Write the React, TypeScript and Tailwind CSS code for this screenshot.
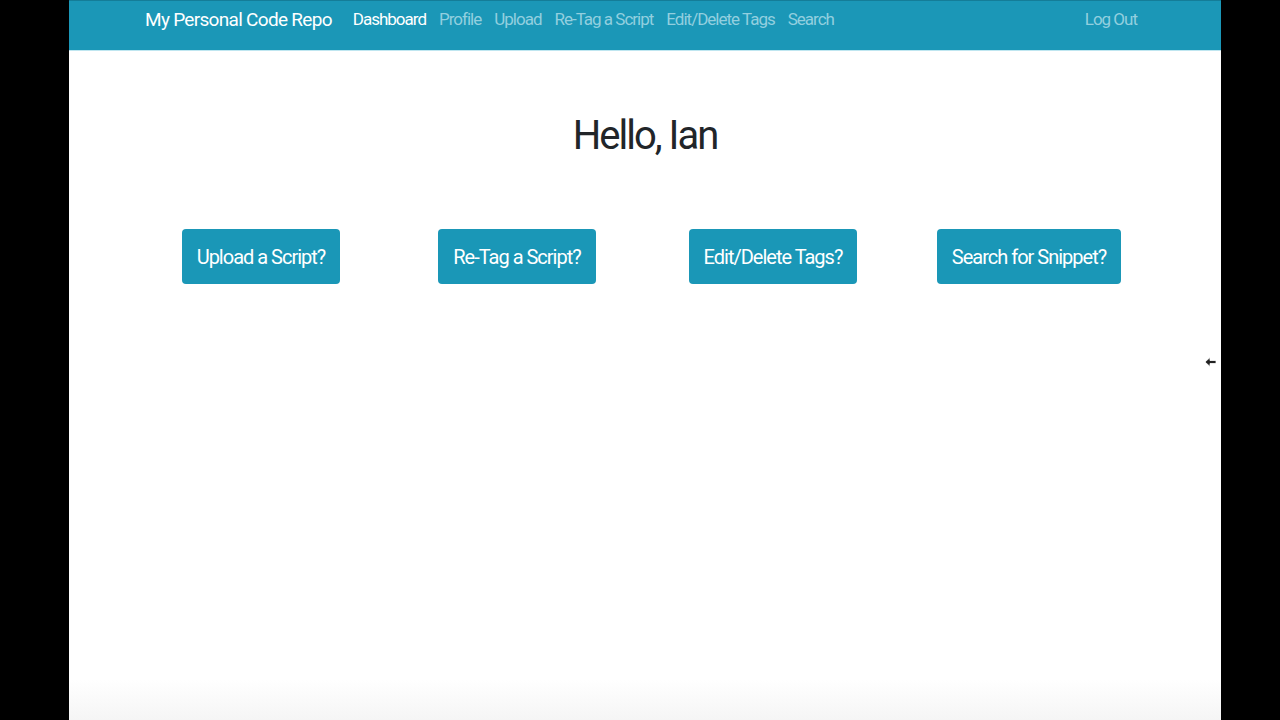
import React from 'react';

const links = ['Profile', 'Upload', 'Re-Tag a Script', 'Edit/Delete Tags', 'Search'];
const actions = ['Upload a Script?', 'Re-Tag a Script?', 'Edit/Delete Tags?', 'Search for Snippet?'];

export default function App() {
  return (
    <div
      className="h-screen bg-black pl-[69px] pr-[59px] flex"
      style={{ fontFamily: 'Roboto, "Liberation Sans", sans-serif' }}
    >
      <div className="relative flex-1 bg-white flex flex-col">
        {/* navbar */}
        <nav className="h-[51px] bg-[#1b97b7] border-t border-[#147d98] border-b border-b-[#bfe6f0] flex items-center pb-[11px] pl-[76px] pr-[84px]">
          <span className="text-[19px] tracking-[-0.7px] text-white mr-[21px]">My Personal Code Repo</span>
          <div className="flex items-center gap-[13px] text-[17px] tracking-[-1px]">
            <span className="text-white">Dashboard</span>
            {links.map(l => (
              <span key={l} className="text-[#92cfdf]">{l}</span>
            ))}
          </div>
          <span className="ml-auto text-[17px] tracking-[-1px] text-[#92cfdf]">Log Out</span>
        </nav>

        <main className="flex-1 flex flex-col items-center">
          <h1 className="mt-[61px] text-[40px] leading-[1.2] tracking-[-2px] text-[#212529]">Hello, Ian</h1>
          <div className="mt-[69px] grid grid-cols-4 w-[1024px]">
            {actions.map(a => (
              <div key={a} className="flex justify-center">
                <button className="h-[55px] px-[15px] rounded-[4px] bg-[#1a97b7] text-white text-[20px] tracking-[-1px]">
                  {a}
                </button>
              </div>
            ))}
          </div>
        </main>

        <div className="h-10 bg-gradient-to-b from-white to-[#f5f5f5]" />

        {/* mouse cursor */}
        <svg className="absolute left-[1135px] top-[356px]" width="14" height="12" viewBox="0 0 14 12">
          <path d="M1 6 L6 1.5 L6 4.5 L12 4.5 L12 7.5 L6 7.5 L6 10.5 Z" fill="#222" stroke="#fff" strokeWidth="0.8" />
        </svg>
      </div>
    </div>
  );
}
